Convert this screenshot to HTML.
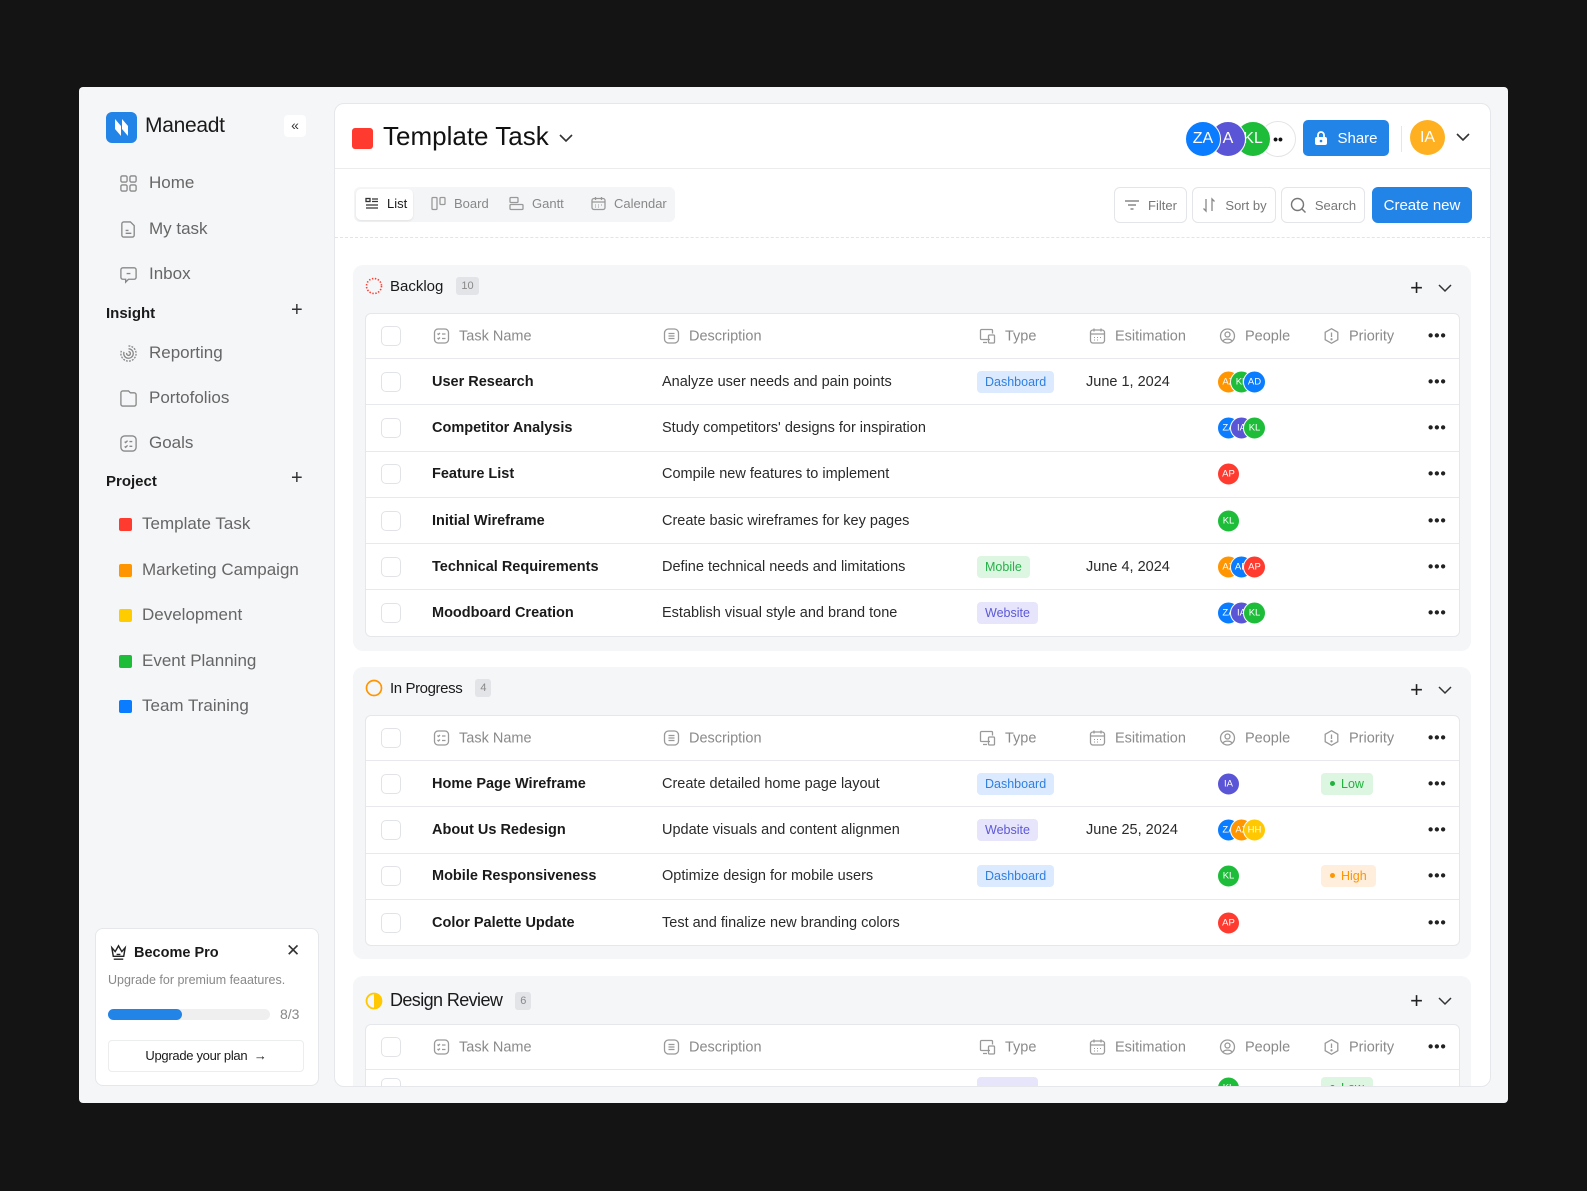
<!DOCTYPE html>
<html><head><meta charset="utf-8">
<style>
*{box-sizing:border-box;margin:0;padding:0}
body{width:1587px;height:1191px;background:#141414;font-family:"Liberation Sans",sans-serif;position:relative;overflow:hidden;color:#1a1a1a}
.abs{position:absolute}
.frame{position:absolute;left:79px;top:87px;width:1429px;height:1016px;background:#f5f6f8;border-radius:4px;overflow:hidden}
.nav{position:absolute;left:40px;font-size:17px;color:#666;display:flex;align-items:center;gap:11px}
.nav svg{width:19px;height:19px}
.sec{position:absolute;left:27px;font-size:15px;font-weight:bold;color:#1a1a1a}
.plus{position:absolute;font-size:20px;color:#333;font-weight:normal}
.proj{position:absolute;left:40px;font-size:17px;color:#666;display:flex;align-items:center;gap:10px}
.proj i{display:inline-block;width:13px;height:13px;border-radius:2px}
.main{position:absolute;left:255px;top:16px;width:1157px;height:984px;background:#fff;border:1px solid #e6e7ea;border-radius:10px;overflow:hidden}
.btn{position:absolute;top:83px;height:36px;border:1px solid #e4e5e8;border-radius:6px;background:#fff;font-size:13px;color:#777;display:flex;align-items:center;justify-content:center;gap:8px}
.group{position:absolute;left:18px;width:1118px;background:#f5f6f8;border-radius:10px;overflow:hidden}
.gtitle{position:absolute;left:12px;top:12px;display:flex;align-items:center;gap:7px;font-size:15px;color:#1a1a1a}
.cnt{display:inline-block;background:#e3e4e8;color:#888;font-size:11px;border-radius:3px;padding:3px 5px;margin-left:6px}
.tbl{position:absolute;left:12px;top:48px;width:1095px;background:#fff;border:1px solid #e6e7ea;border-radius:6px;overflow:hidden}
.r{position:relative;height:46.3px;border-top:1px solid #e8e9ec;font-size:14.5px}
.r.h{border-top:none;height:44px;color:#8a8a8a}
.r>*{position:absolute;top:50%;transform:translateY(-50%)}
.cb{left:15px;width:20px;height:20px;border:1.5px solid #e2e3e6;border-radius:5px}
.nm{left:66px;font-weight:bold;color:#1a1a1a}
.ds{left:296px;color:#2a2a2a}
.es{left:720px;color:#2a2a2a}
.hi{display:flex;align-items:center;gap:9px}
.hi svg{width:17px;height:17px}
.tag{font-size:12.5px;padding:4px 8px;border-radius:4px;left:611px}
.dash{background:#dbeafe;color:#2f7fe0}
.mob{background:#dcf6e2;color:#27b14a}
.web{background:#e6e5fb;color:#5d58d6}
.pr{left:955px;font-size:12.5px;padding:4px 9px;border-radius:4px}
.pr b{display:inline-block;width:5px;height:5px;border-radius:50%;margin-right:6px;vertical-align:middle;position:relative;top:-1px}
.dots{left:1062px;font-size:15px;font-weight:bold;letter-spacing:1px;color:#222}
.av{left:851px;display:flex}
.av span{width:23px;height:23px;border-radius:50%;color:#fff;font-size:9.5px;display:flex;align-items:center;justify-content:center;margin-right:-10px;border:1px solid #fff;overflow:hidden}
.B{background:#0a7cff}.P{background:#5a54d6}.G{background:#1dbd3a}.O{background:#ff9500}.R{background:#ff3b30}.Y{background:#ffc800}
.gact{position:absolute;right:18px;top:10px;display:flex;gap:14px;align-items:center}
</style></head><body>
<div class="frame">
  <div class="abs" style="left:27px;top:25px;width:31px;height:31px;border-radius:6px;background:#2384e8">
    <svg width="31" height="31" viewBox="0 0 31 31"><path d="M9 7v10l6 7V14zM22 24V14l-6-7v10z" fill="#fff"/></svg>
  </div>
  <div class="abs" style="left:66px;top:27px;font-size:21px;color:#1a1a1a;letter-spacing:-0.3px">Maneadt</div>
  <div class="abs" style="left:205px;top:28px;width:22px;height:22px;background:#fff;border-radius:4px;font-size:14px;text-align:center;line-height:20px;color:#333">«</div>

  <div class="nav" style="top:86px"><svg viewBox="0 0 20 20" fill="none" stroke="#888" stroke-width="1.4"><rect x="2" y="2" width="6.5" height="6.5" rx="1.5"/><rect x="11.5" y="2" width="6.5" height="6.5" rx="1.5"/><rect x="2" y="11.5" width="6.5" height="6.5" rx="1.5"/><rect x="11.5" y="11.5" width="6.5" height="6.5" rx="1.5"/></svg>Home</div>
  <div class="nav" style="top:132px"><svg viewBox="0 0 20 20" fill="none" stroke="#888" stroke-width="1.4"><path d="M5 2h7l4 4v10a2 2 0 0 1-2 2H5a2 2 0 0 1-2-2V4a2 2 0 0 1 2-2z"/><path d="M7 11h3M7 14h6"/></svg>My task</div>
  <div class="nav" style="top:177px"><svg viewBox="0 0 20 20" fill="none" stroke="#888" stroke-width="1.4"><path d="M4 3h12a2 2 0 0 1 2 2v8a2 2 0 0 1-2 2h-6l-3 3v-3H4a2 2 0 0 1-2-2V5a2 2 0 0 1 2-2z"/><path d="M8 9h4"/></svg>Inbox</div>
  <div class="sec" style="top:218px">Insight</div><div class="plus" style="left:212px;top:212px">+</div>
  <div class="nav" style="top:256px"><svg viewBox="0 0 20 20" fill="none" stroke="#888" stroke-width="1.4"><path d="M10 2a8 8 0 1 1-7.5 5.2" stroke-dasharray="2 1.2"/><path d="M10 5a5 5 0 1 1-4.7 3.3"/><path d="M10 8a2 2 0 1 1-1.9 1.4"/></svg>Reporting</div>
  <div class="nav" style="top:301px"><svg viewBox="0 0 20 20" fill="none" stroke="#888" stroke-width="1.4"><path d="M4 2h6l2 2h4a2 2 0 0 1 2 2v10a2 2 0 0 1-2 2H4a2 2 0 0 1-2-2V4a2 2 0 0 1 2-2z"/></svg>Portofolios</div>
  <div class="nav" style="top:346px"><svg viewBox="0 0 20 20" fill="none" stroke="#888" stroke-width="1.4"><rect x="2" y="2" width="16" height="16" rx="4"/><path d="M6 8l1 1 2-2M11 8h3M6 13l1 1 2-2M11 13h3"/></svg>Goals</div>
  <div class="sec" style="top:386px">Project</div><div class="plus" style="left:212px;top:380px">+</div>
  <div class="proj" style="top:427px"><i style="background:#ff3b30"></i>Template Task</div>
  <div class="proj" style="top:473px"><i style="background:#ff9500"></i>Marketing Campaign</div>
  <div class="proj" style="top:518px"><i style="background:#ffcc00"></i>Development</div>
  <div class="proj" style="top:564px"><i style="background:#1dbd3a"></i>Event Planning</div>
  <div class="proj" style="top:609px"><i style="background:#0a7cff"></i>Team Training</div>

  <div class="abs" style="left:16px;top:841px;width:224px;height:158px;background:#fff;border:1px solid #e6e7ea;border-radius:8px">
    <svg class="abs" style="left:13px;top:14px" width="19" height="19" viewBox="0 0 20 20" fill="none" stroke="#222" stroke-width="1.5"><path d="M3 5l3.5 4L10 3l3.5 6L17 5l-1.5 9h-11z"/><path d="M5 17h10M8 12h4"/></svg>
    <div class="abs" style="left:38px;top:16px;font-size:14.5px;font-weight:bold">Become Pro</div>
    <div class="abs" style="left:190px;top:12px;font-size:17px;color:#333">✕</div>
    <div class="abs" style="left:12px;top:44px;font-size:12.5px;color:#888">Upgrade for premium feaatures.</div>
    <div class="abs" style="left:12px;top:80px;width:162px;height:11px;background:#efefef;border-radius:6px"><div style="width:74px;height:11px;background:#2384e8;border-radius:6px"></div></div>
    <div class="abs" style="left:184px;top:77px;font-size:14px;color:#888">8/3</div>
    <div class="abs" style="left:12px;top:111px;width:196px;height:32px;border:1px solid #eceded;border-radius:4px;font-size:13px;text-align:center;line-height:30px;letter-spacing:-0.3px">Upgrade your plan &nbsp;→</div>
  </div>

  <div class="main">
    <div class="abs" style="left:17px;top:24px;width:21px;height:21px;background:#ff3b30;border-radius:3px"></div>
    <div class="abs" style="left:48px;top:17px;font-size:26px;color:#111">Template Task</div>
    <svg class="abs" style="left:223px;top:27px" width="16" height="14" viewBox="0 0 16 14" fill="none" stroke="#333" stroke-width="1.6"><path d="M2 4l6 6 6-6"/></svg>
    <div class="abs" style="left:850px;top:17px;display:flex">
      <span style="width:36px;height:36px;border-radius:50%;background:#0a7cff;color:#fff;font-size:16px;display:flex;align-items:center;justify-content:center;border:1px solid #fff;position:relative;z-index:4">ZA</span>
      <span style="width:36px;height:36px;border-radius:50%;background:#5a54d6;color:#fff;font-size:16px;display:flex;align-items:center;justify-content:center;border:1px solid #fff;margin-left:-11px;position:relative;z-index:3">A</span>
      <span style="width:36px;height:36px;border-radius:50%;background:#1dbd3a;color:#fff;font-size:16px;display:flex;align-items:center;justify-content:center;border:1px solid #fff;margin-left:-11px;position:relative;z-index:2">KL</span>
      <span style="width:36px;height:36px;border-radius:50%;background:#fff;color:#111;font-size:14px;font-weight:bold;display:flex;align-items:center;justify-content:center;border:1px solid #e4e4e4;margin-left:-11px;position:relative;z-index:1">••</span>
    </div>
    <div class="abs" style="left:968px;top:16px;width:86px;height:36px;background:#2384e8;border-radius:5px;color:#fff;font-size:15px;display:flex;align-items:center;justify-content:center;gap:9px">
      <svg width="14" height="15" viewBox="0 0 14 15"><rect x="1" y="6" width="12" height="8" rx="2" fill="#fff"/><path d="M4 6V4a3 3 0 0 1 6 0v2" fill="none" stroke="#fff" stroke-width="1.8"/><circle cx="7" cy="10" r="1.3" fill="#2384e8"/></svg>Share</div>
    <div class="abs" style="left:1066px;top:22px;width:1px;height:26px;background:#e6e6e6"></div>
    <div class="abs" style="left:1075px;top:16px;width:35px;height:35px;border-radius:50%;background:#ffb020;color:#fff;font-size:16px;display:flex;align-items:center;justify-content:center">IA</div>
    <svg class="abs" style="left:1120px;top:26px" width="16" height="14" viewBox="0 0 16 14" fill="none" stroke="#333" stroke-width="1.6"><path d="M2 4l6 6 6-6"/></svg>
    <div class="abs" style="left:0;top:64px;width:100%;height:1px;background:#ebecee"></div>

    <div class="abs" style="left:19px;top:83px;width:321px;height:35px;background:#f4f5f7;border-radius:6px"></div>
    <div class="abs" style="left:21px;top:85px;width:57px;height:31px;background:#fff;border-radius:5px;box-shadow:0 1px 2px rgba(0,0,0,.08)"></div>
    <div class="abs" style="left:30px;top:92px;font-size:13px;color:#1a1a1a;display:flex;align-items:center;gap:8px"><svg width="14" height="14" viewBox="0 0 14 14" fill="none" stroke="#333" stroke-width="1.3"><rect x="1" y="1.5" width="4" height="3"/><path d="M7 2h6M7 4.5h6M1 8h12M1 11h12"/></svg>List</div>
    <div class="abs" style="left:96px;top:92px;font-size:13px;color:#888;display:flex;align-items:center;gap:8px"><svg width="15" height="15" viewBox="0 0 15 15" fill="none" stroke="#999" stroke-width="1.3"><rect x="1" y="1.5" width="5" height="12" rx="1"/><rect x="9" y="1.5" width="5" height="7" rx="1"/></svg>Board</div>
    <div class="abs" style="left:174px;top:92px;font-size:13px;color:#888;display:flex;align-items:center;gap:8px"><svg width="15" height="15" viewBox="0 0 15 15" fill="none" stroke="#999" stroke-width="1.3"><rect x="1" y="1.5" width="8" height="5" rx="1"/><rect x="1" y="8.5" width="13" height="5" rx="1"/></svg>Gantt</div>
    <div class="abs" style="left:256px;top:92px;font-size:13px;color:#888;display:flex;align-items:center;gap:8px"><svg width="15" height="15" viewBox="0 0 15 15" fill="none" stroke="#999" stroke-width="1.3"><rect x="1" y="2.5" width="13" height="11" rx="2"/><path d="M1 6h13M4.5 1v3M10.5 1v3"/><path d="M4 9h1M7 9h1M10 9h1M4 11h1M7 11h1" stroke-width="1"/></svg>Calendar</div>

    <div class="btn" style="left:779px;width:73px"><svg width="16" height="12" viewBox="0 0 16 12" fill="none" stroke="#888" stroke-width="1.4"><path d="M1 2h14M4 6h8M6.5 10h3"/></svg>Filter</div>
    <div class="btn" style="left:857px;width:84px"><svg width="16" height="16" viewBox="0 0 16 16" fill="none" stroke="#888" stroke-width="1.3"><path d="M5 2v12l-2.5-2.5M11 14V2l2.5 2.5"/></svg>Sort by</div>
    <div class="btn" style="left:946px;width:84px"><svg width="17" height="17" viewBox="0 0 17 17" fill="none" stroke="#777" stroke-width="1.4"><circle cx="7.5" cy="7.5" r="6"/><path d="M12 12l3.5 3.5"/></svg>Search</div>
    <div class="btn" style="left:1037px;width:100px;background:#2384e8;border-color:#2384e8;color:#fff;font-size:15px">Create new</div>
    <div class="abs" style="left:0;top:133px;width:100%;border-top:1px dashed #e3e4e6"></div>

    <!-- Group 1 -->
    <div class="group" style="top:161px;height:386px">
      <div class="gtitle"><svg width="18" height="18" viewBox="0 0 18 18" fill="none" stroke="#ff3b30" stroke-width="1.6" stroke-dasharray="1.4 1.6"><circle cx="9" cy="9" r="7.5"/></svg>Backlog<span class="cnt">10</span></div>
      <div class="gact"><span style="font-size:22px;color:#222">+</span><svg width="16" height="14" viewBox="0 0 16 14" fill="none" stroke="#333" stroke-width="1.5"><path d="M2 4l6 6 6-6"/></svg></div>
      <div class="tbl">
        <div class="r h"><div class="cb"></div>
          <div class="hi" style="left:67px"><svg viewBox="0 0 17 17" fill="none" stroke="#999" stroke-width="1.3"><rect x="1.5" y="1.5" width="14" height="14" rx="3.5"/><path d="M4.5 6l1 1 1.5-1.5M9 6.5h3.5M4.5 10.5l1 1 1.5-1.5M9 11h3.5"/></svg>Task Name</div>
          <div class="hi" style="left:297px"><svg viewBox="0 0 17 17" fill="none" stroke="#999" stroke-width="1.3"><rect x="1.5" y="1.5" width="14" height="14" rx="4"/><path d="M5.5 6h6M5.5 8.5h6M5.5 11h6"/></svg>Description</div>
          <div class="hi" style="left:613px"><svg viewBox="0 0 17 17" fill="none" stroke="#999" stroke-width="1.3"><path d="M11 12H2.5a1 1 0 0 1-1-1V3a1 1 0 0 1 1-1h10a1 1 0 0 1 1 1v3M4 15h4"/><rect x="9.5" y="7.5" width="6" height="8" rx="1"/></svg>Type</div>
          <div class="hi" style="left:723px"><svg viewBox="0 0 17 17" fill="none" stroke="#999" stroke-width="1.3"><rect x="1.5" y="2.5" width="14" height="13" rx="2.5"/><path d="M1.5 6.5h14M5 1v3M12 1v3"/><path d="M5 10h1M8 10h1M11 10h1M5 12.5h1M8 12.5h1" stroke-width="1"/></svg>Esitimation</div>
          <div class="hi" style="left:853px"><svg viewBox="0 0 17 17" fill="none" stroke="#999" stroke-width="1.3"><circle cx="8.5" cy="8.5" r="7"/><circle cx="8.5" cy="7" r="2.5"/><path d="M4 13.5c1.5-2.5 7.5-2.5 9 0"/></svg>People</div>
          <div class="hi" style="left:957px"><svg viewBox="0 0 17 17" fill="none" stroke="#999" stroke-width="1.3"><path d="M8.5 1.2l6.3 3.6v7.4l-6.3 3.6-6.3-3.6V4.8z"/><path d="M8.5 5v4.5"/><circle cx="8.5" cy="11.8" r=".5" fill="#999"/></svg>Priority</div>
          <div class="dots">•••</div>
        </div>
        <div class="r"><div class="cb"></div><div class="nm">User Research</div><div class="ds">Analyze user needs and pain points</div><div class="tag dash">Dashboard</div><div class="es">June 1, 2024</div><div class="av"><span class="O">AZ</span><span class="G">KL</span><span class="B">AD</span></div><div class="dots">•••</div></div>
        <div class="r"><div class="cb"></div><div class="nm">Competitor Analysis</div><div class="ds">Study competitors' designs for inspiration</div><div class="av"><span class="B">ZA</span><span class="P">IA</span><span class="G">KL</span></div><div class="dots">•••</div></div>
        <div class="r"><div class="cb"></div><div class="nm">Feature List</div><div class="ds">Compile new features to implement</div><div class="av"><span class="R">AP</span></div><div class="dots">•••</div></div>
        <div class="r"><div class="cb"></div><div class="nm">Initial Wireframe</div><div class="ds">Create basic wireframes for key pages</div><div class="av"><span class="G">KL</span></div><div class="dots">•••</div></div>
        <div class="r"><div class="cb"></div><div class="nm">Technical Requirements</div><div class="ds">Define technical needs and limitations</div><div class="tag mob">Mobile</div><div class="es">June 4, 2024</div><div class="av"><span class="O">AZ</span><span class="B">AD</span><span class="R">AP</span></div><div class="dots">•••</div></div>
        <div class="r"><div class="cb"></div><div class="nm">Moodboard Creation</div><div class="ds">Establish visual style and brand tone</div><div class="tag web">Website</div><div class="av"><span class="B">ZA</span><span class="P">IA</span><span class="G">KL</span></div><div class="dots">•••</div></div>
      </div>
    </div>

    <!-- Group 2 -->
    <div class="group" style="top:563px;height:292px">
      <div class="gtitle"><svg width="18" height="18" viewBox="0 0 18 18" fill="none" stroke="#ff9500" stroke-width="1.7"><circle cx="9" cy="9" r="7.5"/></svg><span style="letter-spacing:-0.4px">In Progress</span><span class="cnt">4</span></div>
      <div class="gact"><span style="font-size:22px;color:#222">+</span><svg width="16" height="14" viewBox="0 0 16 14" fill="none" stroke="#333" stroke-width="1.5"><path d="M2 4l6 6 6-6"/></svg></div>
      <div class="tbl">
        <div class="r h"><div class="cb"></div>
          <div class="hi" style="left:67px"><svg viewBox="0 0 17 17" fill="none" stroke="#999" stroke-width="1.3"><rect x="1.5" y="1.5" width="14" height="14" rx="3.5"/><path d="M4.5 6l1 1 1.5-1.5M9 6.5h3.5M4.5 10.5l1 1 1.5-1.5M9 11h3.5"/></svg>Task Name</div>
          <div class="hi" style="left:297px"><svg viewBox="0 0 17 17" fill="none" stroke="#999" stroke-width="1.3"><rect x="1.5" y="1.5" width="14" height="14" rx="4"/><path d="M5.5 6h6M5.5 8.5h6M5.5 11h6"/></svg>Description</div>
          <div class="hi" style="left:613px"><svg viewBox="0 0 17 17" fill="none" stroke="#999" stroke-width="1.3"><path d="M11 12H2.5a1 1 0 0 1-1-1V3a1 1 0 0 1 1-1h10a1 1 0 0 1 1 1v3M4 15h4"/><rect x="9.5" y="7.5" width="6" height="8" rx="1"/></svg>Type</div>
          <div class="hi" style="left:723px"><svg viewBox="0 0 17 17" fill="none" stroke="#999" stroke-width="1.3"><rect x="1.5" y="2.5" width="14" height="13" rx="2.5"/><path d="M1.5 6.5h14M5 1v3M12 1v3"/><path d="M5 10h1M8 10h1M11 10h1M5 12.5h1M8 12.5h1" stroke-width="1"/></svg>Esitimation</div>
          <div class="hi" style="left:853px"><svg viewBox="0 0 17 17" fill="none" stroke="#999" stroke-width="1.3"><circle cx="8.5" cy="8.5" r="7"/><circle cx="8.5" cy="7" r="2.5"/><path d="M4 13.5c1.5-2.5 7.5-2.5 9 0"/></svg>People</div>
          <div class="hi" style="left:957px"><svg viewBox="0 0 17 17" fill="none" stroke="#999" stroke-width="1.3"><path d="M8.5 1.2l6.3 3.6v7.4l-6.3 3.6-6.3-3.6V4.8z"/><path d="M8.5 5v4.5"/><circle cx="8.5" cy="11.8" r=".5" fill="#999"/></svg>Priority</div>
          <div class="dots">•••</div>
        </div>
        <div class="r"><div class="cb"></div><div class="nm">Home Page Wireframe</div><div class="ds">Create detailed home page layout</div><div class="tag dash">Dashboard</div><div class="av"><span class="P">IA</span></div><div class="pr" style="background:#dcf6e2;color:#1fb33c"><b style="background:#1fb33c"></b>Low</div><div class="dots">•••</div></div>
        <div class="r"><div class="cb"></div><div class="nm">About Us Redesign</div><div class="ds">Update visuals and content alignmen</div><div class="tag web">Website</div><div class="es">June 25, 2024</div><div class="av"><span class="B">ZA</span><span class="O">AZ</span><span class="Y">HH</span></div><div class="dots">•••</div></div>
        <div class="r"><div class="cb"></div><div class="nm">Mobile Responsiveness</div><div class="ds">Optimize design for mobile users</div><div class="tag dash">Dashboard</div><div class="av"><span class="G">KL</span></div><div class="pr" style="background:#ffeedc;color:#ff9500"><b style="background:#ff9500"></b>High</div><div class="dots">•••</div></div>
        <div class="r"><div class="cb"></div><div class="nm">Color Palette Update</div><div class="ds">Test and finalize new branding colors</div><div class="av"><span class="R">AP</span></div><div class="dots">•••</div></div>
      </div>
    </div>

    <!-- Group 3 -->
    <div class="group" style="top:872px;height:140px">
      <div class="gtitle" style="top:14px;font-size:18px"><svg width="18" height="18" viewBox="0 0 18 18"><circle cx="9" cy="9" r="7.5" fill="none" stroke="#ffc800" stroke-width="1.8"/><path d="M9 1.5a7.5 7.5 0 0 1 0 15z" fill="#ffc800"/></svg><span style="letter-spacing:-0.6px">Design Review</span><span class="cnt">6</span></div>
      <div class="gact" style="top:12px"><span style="font-size:22px;color:#222">+</span><svg width="16" height="14" viewBox="0 0 16 14" fill="none" stroke="#333" stroke-width="1.5"><path d="M2 4l6 6 6-6"/></svg></div>
      <div class="tbl" style="height:120px">
        <div class="r h"><div class="cb"></div>
          <div class="hi" style="left:67px"><svg viewBox="0 0 17 17" fill="none" stroke="#999" stroke-width="1.3"><rect x="1.5" y="1.5" width="14" height="14" rx="3.5"/><path d="M4.5 6l1 1 1.5-1.5M9 6.5h3.5M4.5 10.5l1 1 1.5-1.5M9 11h3.5"/></svg>Task Name</div>
          <div class="hi" style="left:297px"><svg viewBox="0 0 17 17" fill="none" stroke="#999" stroke-width="1.3"><rect x="1.5" y="1.5" width="14" height="14" rx="4"/><path d="M5.5 6h6M5.5 8.5h6M5.5 11h6"/></svg>Description</div>
          <div class="hi" style="left:613px"><svg viewBox="0 0 17 17" fill="none" stroke="#999" stroke-width="1.3"><path d="M11 12H2.5a1 1 0 0 1-1-1V3a1 1 0 0 1 1-1h10a1 1 0 0 1 1 1v3M4 15h4"/><rect x="9.5" y="7.5" width="6" height="8" rx="1"/></svg>Type</div>
          <div class="hi" style="left:723px"><svg viewBox="0 0 17 17" fill="none" stroke="#999" stroke-width="1.3"><rect x="1.5" y="2.5" width="14" height="13" rx="2.5"/><path d="M1.5 6.5h14M5 1v3M12 1v3"/><path d="M5 10h1M8 10h1M11 10h1M5 12.5h1M8 12.5h1" stroke-width="1"/></svg>Esitimation</div>
          <div class="hi" style="left:853px"><svg viewBox="0 0 17 17" fill="none" stroke="#999" stroke-width="1.3"><circle cx="8.5" cy="8.5" r="7"/><circle cx="8.5" cy="7" r="2.5"/><path d="M4 13.5c1.5-2.5 7.5-2.5 9 0"/></svg>People</div>
          <div class="hi" style="left:957px"><svg viewBox="0 0 17 17" fill="none" stroke="#999" stroke-width="1.3"><path d="M8.5 1.2l6.3 3.6v7.4l-6.3 3.6-6.3-3.6V4.8z"/><path d="M8.5 5v4.5"/><circle cx="8.5" cy="11.8" r=".5" fill="#999"/></svg>Priority</div>
          <div class="dots">•••</div>
        </div>
        <div class="r"><div class="cb" style="top:18px"></div><div class="tag web" style="color:transparent;top:18px">Website</div><div class="av" style="top:18px"><span class="G">KL</span></div><div class="pr" style="background:#dcf6e2;color:#1fb33c;top:18px"><b style="background:#1fb33c"></b>Low</div></div>
      </div>
    </div>
  </div>
</div>
</body></html>
